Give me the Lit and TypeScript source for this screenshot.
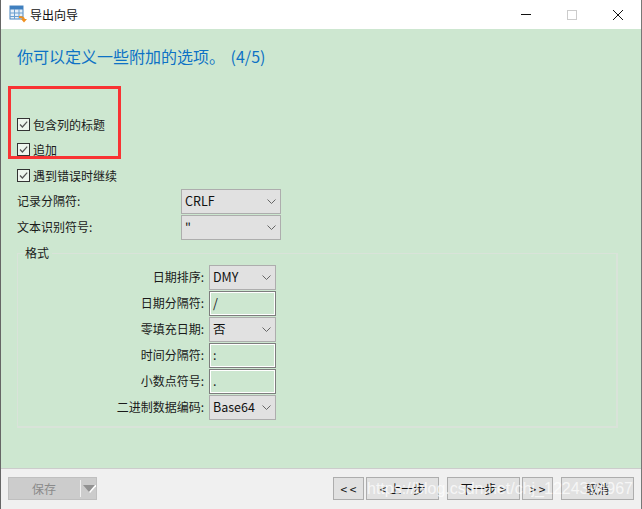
import { LitElement, html, css } from "lit";
import { customElement } from "lit/decorators.js";

const chevron = html`<svg class="chev" width="9" height="5" viewBox="0 0 9 5"><path d="M.5.5 4.500 4.500 8.500.5" fill="none" stroke="#666" stroke-width="1"/></svg>`;

@customElement("app-root")
export class AppRoot extends LitElement {
  static styles = css`
    :host { display: block; width: 642px; height: 509px; position: relative; overflow: hidden;
      font-family: "Noto Sans CJK SC", "Liberation Sans", sans-serif; font-size: 12px; color: #1a1a1a; background: #fff; }
    .win { height: 509px; display: flex; flex-direction: column; border-left: 1px solid #666; border-right: 1px solid #777; box-sizing: border-box; }
    .title { height: 29px; flex: none; display: flex; align-items: center; background: #fff; padding-left: 8px; }
    .title .name { margin-left: 2px; color: #111; }
    .wc { margin-left: auto; display: flex; align-items: center; }
    .wc span { width: 46px; height: 29px; display: flex; align-items: center; justify-content: center; }
    .body { flex: 1; min-height: 0; background: #cde7d0; display: flex; flex-direction: column; padding: 15px 0 0 16px; position: relative; }
    h1 { margin: 0; font-size: 16px; font-weight: 400; color: #0d72c5; line-height: 24px; word-spacing: 2px; }
    .checks { margin-top: 48px; display: flex; flex-direction: column; gap: 9px; }
    .check { display: flex; align-items: center; gap: 3px; height: 16px; }
    .check:nth-child(3) { margin-top: 1px; }
    .box { width: 11px; height: 11px; border: 1px solid #333; background: #eef5ee; display: block; flex: none; }
    .sep { display: flex; flex-direction: column; gap: 1px; margin-top: 6px; }
    .row { display: flex; align-items: center; height: 25px; }
    .row .lab { width: 164px; padding-bottom: 2px; }
    .sel { box-sizing: border-box; width: 100px; height: 25px; border: 1px solid #adadad; background: #e1e1e1; display: flex; align-items: center; padding: 0 4px 0 3px; justify-content: space-between; color: #111; }
    .sel span { font-size: 12.5px; padding-bottom: 2px; }
    .fmt { box-sizing: border-box; flex: none; position: relative; margin-top: 13px; width: 601px; height: 175px; border: solid #d9e3d9; border-width: 1px 2px 2px 1px; padding-top: 11px; display: flex; flex-direction: column; gap: 1px; }
    .legend { position: absolute; left: 7px; top: -9px; background: #cde7d0; padding: 0 3px 0 0; line-height: 16px; }
    .frow { display: flex; align-items: center; justify-content: flex-start; height: 25px; }
    .frow .lab { width: 186px; text-align: right; margin-right: 5px; white-space: nowrap; padding-bottom: 2px; }
    .frow .sel, .inp { width: 67px; }
    .inp { box-sizing: border-box; height: 25px; border: 1px solid #7d7d7d; box-shadow: inset 0 0 0 1px #fff; background: #cde7d0; padding: 0 0 2px 3px; display: flex; align-items: center; font-size: 12.5px; }
    .footer { box-sizing: border-box; height: 41px; flex: none; background: #f0f0f0; border-top: 1px solid #ccc; display: flex; align-items: flex-start; padding: 8px 7px 0 7px; position: relative; }
    .btn { box-sizing: border-box; height: 23px; border: 1px solid #adadad; background: #e1e1e1; display: flex; align-items: center; justify-content: center; color: #111; white-space: nowrap; }
    .save { width: 89px; background: #ccc; border-color: #bfbfbf; color: #8a8a8a; justify-content: flex-start; }
    .save .t { width: 70px; text-align: center; }
    .save .div { width: 1px; height: 17px; background: #f0f0f0; margin-left: 1px; }
    .save svg { margin-left: 2px; }
    .nav { margin-left: auto; display: flex; }
    .wm { position: absolute; left: 366px; top: 11px; font: 16px "Liberation Sans", sans-serif; color: rgba(255,255,255,.72); white-space: nowrap; }
    .red { position: absolute; left: 7px; top: 57px; width: 107px; height: 67px; border: 3px solid #f83333; }
  `;

  private sel(v: string) { return html`<div class="sel"><span>${v}</span>${chevron}</div>`; }
  private check(t: string) {
    return html`<div class="check"><svg class="box" viewBox="0 0 11 11"><path d="M2 5.500 4.400 8 9.200 2.600" fill="none" stroke="#555" stroke-width="1.200"/></svg><span>${t}</span></div>`;
  }

  render() {
    return html`<div class="win">
      <div class="title">
        <svg width="19" height="19" viewBox="0 0 19 19">
          <rect x="1" y="1" width="13" height="13" fill="#e8f0f8" stroke="#4a86c0"/>
          <rect x="1" y="1" width="13" height="3.500" fill="#3f7fbf"/>
          <path d="M1 8h13M1 11.500h13M5.500 4v10M10 4v10" stroke="#6a9fd0"/>
          <path d="M10 12c3 0 4.500 0 5 2.500" fill="none" stroke="#f09020" stroke-width="2"/>
          <path d="M12 14h6l-3 3.500z" fill="#f09020"/>
        </svg>
        <span class="name">导出向导</span>
        <div class="wc">
          <span><svg width="10" height="1"><rect width="10" height="1" fill="#111"/></svg></span>
          <span><svg width="10" height="10"><rect x=".5" y=".5" width="9" height="9" fill="none" stroke="#ccc"/></svg></span>
          <span><svg width="10" height="10"><path d="M0 0l10 10M10 0 0 10" stroke="#111"/></svg></span>
        </div>
      </div>
      <div class="body">
        <h1>你可以定义一些附加的选项。 (4/5)</h1>
        <div class="checks">
          ${this.check("包含列的标题")}
          ${this.check("追加")}
          ${this.check("遇到错误时继续")}
        </div>
        <div class="sep">
          <div class="row"><span class="lab">记录分隔符:</span>${this.sel("CRLF")}</div>
          <div class="row"><span class="lab">文本识别符号:</span>${this.sel('"')}</div>
        </div>
        <div class="fmt">
          <span class="legend">格式</span>
          <div class="frow"><span class="lab">日期排序:</span>${this.sel("DMY")}</div>
          <div class="frow"><span class="lab">日期分隔符:</span><div class="inp">/</div></div>
          <div class="frow"><span class="lab">零填充日期:</span>${this.sel("否")}</div>
          <div class="frow"><span class="lab">时间分隔符:</span><div class="inp">:</div></div>
          <div class="frow"><span class="lab">小数点符号:</span><div class="inp">.</div></div>
          <div class="frow"><span class="lab">二进制数据编码:</span>${this.sel("Base64")}</div>
        </div>
        <div class="red"></div>
      </div>
      <div class="footer">
        <div class="btn save"><span class="t">保存</span><span class="div"></span>
          <svg width="13" height="8" viewBox="0 0 13 8"><path d="M0 0h13L6.500 7.500z" fill="#929292"/><path d="M13 0 6.500 7.500" stroke="#fff" stroke-width="1.500"/></svg>
        </div>
        <div class="nav">
          <div class="btn" style="width:31px">&lt; &lt;</div>
          <div class="btn" style="width:73px;margin-left:2px">&lt; 上一步</div>
          <div class="btn" style="width:73px;margin-left:8px">下一步 &gt;</div>
          <div class="btn" style="width:31px;margin-left:2px">&gt; &gt;</div>
          <div class="btn" style="width:73px;margin-left:8px">取消</div>
        </div>
        <div class="wm">https://blog.csdn.net/chj_1224394967</div>
      </div>
    </div>`;
  }
}
